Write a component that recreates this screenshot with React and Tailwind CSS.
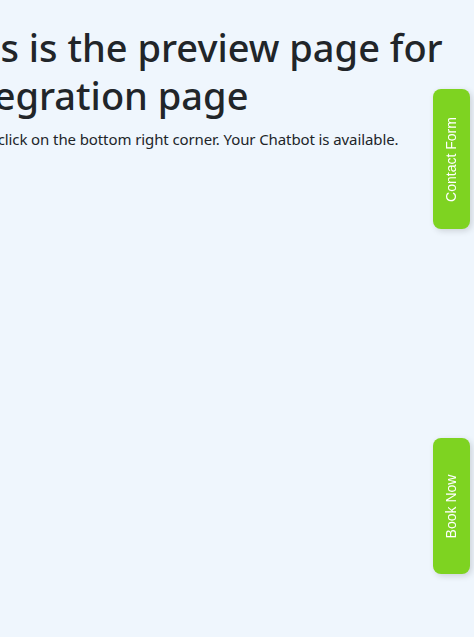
export default function App() {
  return (
    <div className="min-h-[637px] w-full overflow-hidden bg-[#eff6fd] text-[#212529] [font-family:'Noto_Sans',sans-serif]">
      <div className="w-[560px] pt-[23px]">
        <h1 className="-ml-[55px] text-[38px] font-medium leading-[48px]">
          This is the preview page for integration page
        </h1>
        <p className="-ml-[51px] mt-[8px] text-[15px] leading-6 tracking-[-0.1px]">
          Please click on the bottom right corner. Your Chatbot is available.
        </p>
      </div>

      <button className="fixed right-[4px] top-[89px] flex h-[140px] w-[37px] items-center justify-center rounded-[8px] bg-[#7ed321] shadow-[2px_2px_6px_rgba(0,0,0,0.15)]">
        <span className="-rotate-90 whitespace-nowrap text-[14px] text-white [font-family:'Liberation_Sans',sans-serif]">
          Contact Form
        </span>
      </button>

      <button className="fixed right-[4px] top-[438px] flex h-[136px] w-[37px] items-center justify-center rounded-[8px] bg-[#7ed321] shadow-[2px_2px_6px_rgba(0,0,0,0.15)]">
        <span className="-rotate-90 whitespace-nowrap text-[14px] text-white [font-family:'Liberation_Sans',sans-serif]">
          Book Now
        </span>
      </button>
    </div>
  );
}
